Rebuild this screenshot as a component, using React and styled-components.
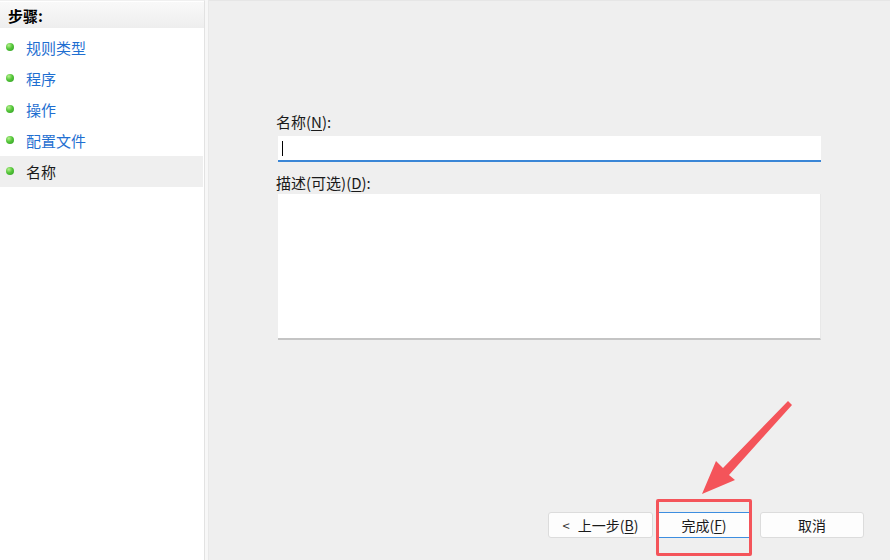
import styled, { createGlobalStyle } from "styled-components"

const GlobalStyle = createGlobalStyle`
    html, body {
        margin: 0;
        padding: 0;
        background: #efefef;
    }

    body {
        font-family: "Noto Sans CJK SC", "Noto Sans", sans-serif;
        color: #1a1a1a;
    }
`

const Window = styled.div`
    position: relative;
    display: flex;
    width: 890px;
    height: 560px;
    overflow: hidden;
    background: #efefef;
`

const Sidebar = styled.aside`
    width: 205px;
    flex-shrink: 0;
    background: #fff;
    border-right: 1px solid #e2e2e2;
    border-top: 1px solid #f0f0f0;
    box-sizing: border-box;
    padding-top: 1px;
`

const SidebarHeader = styled.div`
    height: 26px;
    display: flex;
    align-items: center;
    padding-left: 8px;
    font-size: 15px;
    font-weight: 700;
    color: #000;
    background: linear-gradient(#f9f9f9, #eeeeee);
`

const StepList = styled.ul`
    list-style: none;
    margin: 0;
    padding: 4px 1px 0 0;
`

const StepRow = styled.li`
    height: 31px;
    display: flex;
    align-items: center;
    gap: 12px;
    padding-left: 6px;
    font-size: 15px;
    color: ${({ $active }) => ($active ? "#1a1a1a" : "#1f6fd1")};
    background: ${({ $active }) => ($active ? "#efefef" : "transparent")};
`

const Dot = styled.span`
    width: 8px;
    height: 8px;
    border-radius: 50%;
    background: radial-gradient(circle at 35% 30%, #b6f08e 0%, #55c63a 45%, #2d9a22 100%);
    flex-shrink: 0;
    margin-top: -2px;
`

const Splitter = styled.div`
    width: 3px;
    flex-shrink: 0;
    background: #f7f7f7;
    border-right: 1px solid #e8e8e8;
`

const Pane = styled.main`
    flex: 1;
    display: flex;
    flex-direction: column;
    border-top: 1px solid #e6e6e6;
`

const Form = styled.div`
    display: flex;
    flex-direction: column;
    padding: 110px 0 0 67px;
    width: 546px;
`

const Label = styled.label`
    height: 20px;
    display: flex;
    align-items: center;
    font-size: 15px;
    color: #1a1a1a;
    margin-bottom: ${({ $gap }) => $gap}px;

    u {
        text-underline-offset: 2px;
    }
`

const TextBox = styled.div`
    box-sizing: border-box;
    margin-left: 2px;
    width: 543px;
    height: 26px;
    background: #fff;
    border-bottom: 2px solid #3a86d6;
    display: flex;
    align-items: center;
    padding-left: 4px;
    margin-bottom: 10px;
`

const Caret = styled.span`
    width: 1px;
    height: 15px;
    background: #000;
`

const TextArea = styled.div`
    box-sizing: border-box;
    margin-left: 2px;
    width: 543px;
    height: 146px;
    background: #fff;
    border-right: 1px solid #e8e8e8;
    border-bottom: 2px solid #c4c4c4;
`

const ButtonBar = styled.div`
    margin-top: auto;
    display: flex;
    align-items: center;
    justify-content: flex-end;
    padding: 0 26px 22px 0;
`

const Button = styled.button`
    box-sizing: border-box;
    width: ${({ $w }) => $w}px;
    height: 26px;
    margin-right: ${({ $mr }) => $mr || 0}px;
    border: 1px solid ${({ $focused }) => ($focused ? "#3d8ee0" : "#dcdcdc")};
    border-radius: 3px;
    background: #fdfdfd;
    font-family: "Noto Sans CJK SC", "Noto Sans", sans-serif;
    font-size: 14px;
    color: #1a1a1a;
    display: flex;
    align-items: center;
    justify-content: center;
    gap: 8px;
    padding: 0;

    u {
        text-underline-offset: 2px;
    }
`

const Chevron = styled.span`
    font-size: 13px;
    color: #333;
`

const Highlight = styled.div`
    position: relative;
    margin-right: 8px;
`

const RedBox = styled.div`
    position: absolute;
    left: 0;
    right: 0;
    top: -13px;
    bottom: -18px;
    border: 3px solid #f4545a;
    border-radius: 2px;
    pointer-events: none;
`

const Annotation = styled.svg`
    position: absolute;
    inset: 0;
    pointer-events: none;
`

const steps = ["规则类型", "程序", "操作", "配置文件", "名称"]

const App = () => {
    return (
        <Window>
            <GlobalStyle />
            <Sidebar>
                <SidebarHeader>步骤:</SidebarHeader>
                <StepList>
                    {steps.map((step, i) => (
                        <StepRow key={step} $active={i === steps.length - 1}>
                            <Dot />
                            {step}
                        </StepRow>
                    ))}
                </StepList>
            </Sidebar>
            <Splitter />
            <Pane>
                <Form>
                    <Label $gap={5}>
                        <span>名称(<u>N</u>):</span>
                    </Label>
                    <TextBox>
                        <Caret />
                    </TextBox>
                    <Label $gap={2}>
                        <span>描述(可选)(<u>D</u>):</span>
                    </Label>
                    <TextArea />
                </Form>
                <ButtonBar>
                    <Button $w={105} $mr={3}>
                        <Chevron>&lt;</Chevron>
                        <span>上一步(<u>B</u>)</span>
                    </Button>
                    <Highlight>
                        <Button $w={96} $focused>
                            <span>完成(<u>F</u>)</span>
                        </Button>
                        <RedBox />
                    </Highlight>
                    <Button $w={104}>取消</Button>
                </ButtonBar>
            </Pane>
            <Annotation width="890" height="560" viewBox="0 0 890 560">
                <polygon
                    points="702,494 716,461 723,468 788,401 792,405 729,475 735,480"
                    fill="#f4545a"
                />
            </Annotation>
        </Window>
    )
}

export default App
